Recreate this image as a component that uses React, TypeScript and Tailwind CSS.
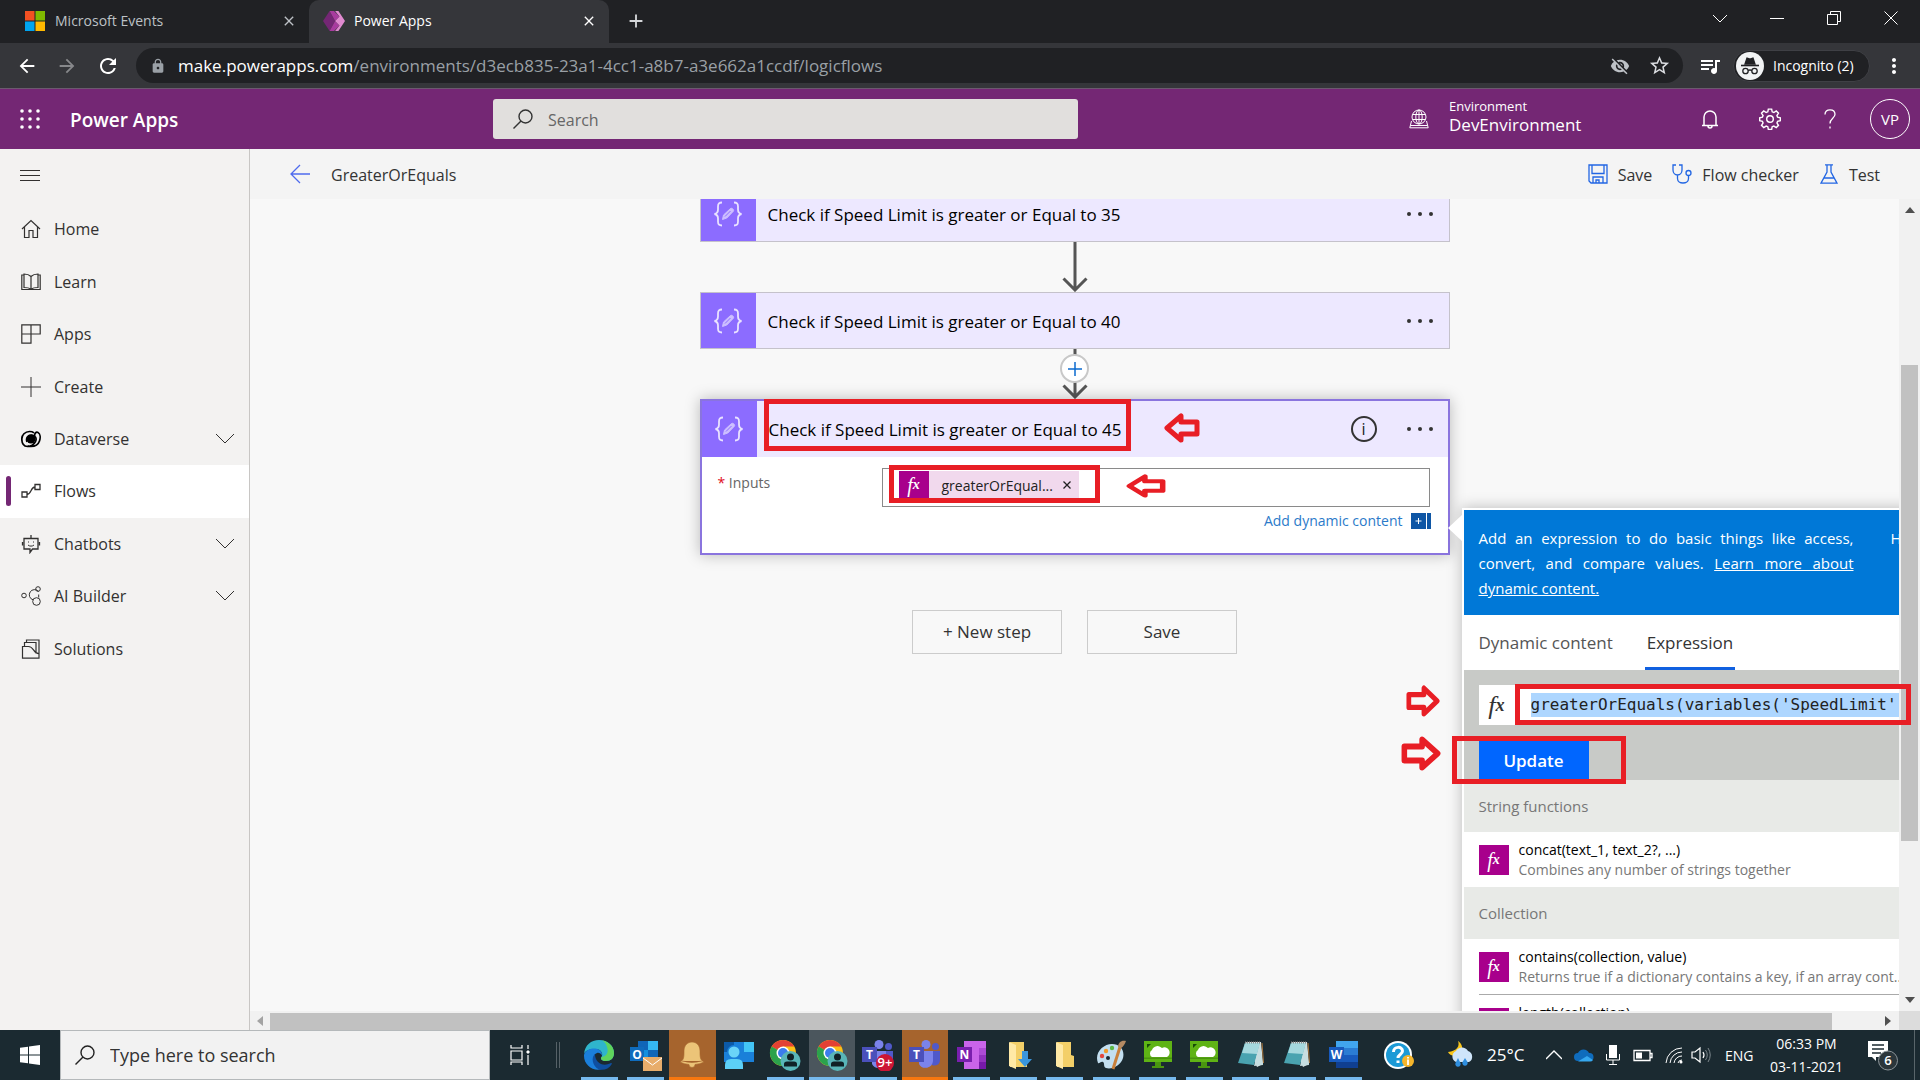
import { ReactNode } from "react";
import {
  MdAdd,
  MdArrowBack,
  MdArrowForward,
  MdClose,
  MdLock,
  MdMoreVert,
  MdQueueMusic,
  MdRefresh,
  MdStarBorder,
  MdVisibilityOff,
} from "react-icons/md";

const Svg = ({ box = 20, className = "w-5 h-5", children }: any) => (
  <svg
    viewBox={`0 0 ${box} ${box}`}
    className={`${className} shrink-0`}
    fill="none"
    stroke="currentColor"
  >
    {children}
  </svg>
);

const Chevron = () => (
  <Svg className="w-5 h-5">
    <path d="M1 5l9 9 9-9" />
  </Svg>
);

const Magnifier = ({ className }: { className: string }) => (
  <Svg className={className}>
    <circle cx="12.5" cy="7.5" r="6.5" strokeWidth="1.4" />
    <path d="M8 12l-7.500 7.500" strokeWidth="1.4" />
  </Svg>
);

const navItems: { label: string; icon: ReactNode; more?: boolean; active?: boolean }[] = [
  {
    label: "Home",
    icon: <path d="M1 10l9-8.500 9 8.500M3.500 8v10.500h4.500v-7h4v7h4.500V8" strokeWidth="1.200" />,
  },
  {
    label: "Learn",
    icon: (
      <path d="M3 3H.8v14.500h18.400V3H17M10 4.500C8 2.500 6 2 3 2v13.500c3 0 5 .3 7 1.500 2-1.200 4-1.500 7-1.500V2c-3 0-5 .5-7 2.500zV17" strokeWidth="1.200" />
    ),
  },
  {
    label: "Apps",
    icon: <path d="M.8.8h18.400v9.200H.8zM.8 10v9.200H10V.8" strokeWidth="1.200" />,
  },
  { label: "Create", icon: <path d="M10 0v20M0 10h20" /> },
  {
    label: "Dataverse",
    more: true,
    icon: (
      <>
        <circle cx="10" cy="10" r="4.500" fill="#000" stroke="none" />
        <path
          d="M6 13c-1.500-4 1-7 4.500-7 4 0 5.500 3.500 4 6.500-1.500 2.800-5 5-8 5C2.500 17.500.8 14 .8 10 .8 6 4 2.500 8.500 2.500c2 0 3.500.5 4.500 1.300M14 7c-1-2 1-4.500 3-3.500 2.500 1.300 2.500 5.500 1.500 8.500-1.200 3.500-4.500 5.500-8.500 5.500-1.500 0-2.500-.3-3.500-.8"
          stroke="#000"
          strokeWidth="1.700"
        />
      </>
    ),
  },
  {
    label: "Flows",
    active: true,
    icon: <path d="M1 11h5v5H1zM14 3.500h5v5h-5zM6 13.500c4.500 0 3.500-7.500 8-7.500" strokeWidth="1.300" />,
  },
  {
    label: "Chatbots",
    more: true,
    icon: (
      <>
        <path d="M3 4.500h14v10.500h-5.500L9 18.500V15H3zM10 4.500V1M1.500 8v3.500M18.500 8v3.500" strokeWidth="1.300" />
        <path d="M7 11c1.500 1.500 4.500 1.500 6 0M7 8h1M12 8h1" />
      </>
    ),
  },
  {
    label: "AI Builder",
    more: true,
    icon: (
      <>
        <circle cx="3" cy="9.500" r="2.300" />
        <circle cx="17" cy="3" r="2.300" />
        <circle cx="15.500" cy="15.500" r="3.800" />
        <path d="M12 13.800A5.200 5.200 0 1 1 17.500 5.500M17.700 8.500v3" />
      </>
    ),
  },
  {
    label: "Solutions",
    icon: (
      <path d="M1.500 7.500v11.700h16.500v-4.500c-5.500.5-5-7.200-10.500-7.200zM3.500 7V3.500h11.500v11M5.500 3.500V1H18v14" strokeWidth="1.200" />
    ),
  },
];

const Fx = ({ className }: { className: string }) => (
  <span
    className={`flex shrink-0 items-center justify-center font-['Liberation_Serif',serif] italic ${className}`}
  >
    f<sub className="bottom-0 text-[70%] font-bold">x</sub>
  </span>
);

const ComposeIcon = () => (
  <span className="flex w-[55px] shrink-0 items-center justify-center bg-[#8c6cff] text-[#e9e2ff]">
    <svg viewBox="0 0 30 26" className="h-[26px] w-[30px]" fill="none" stroke="currentColor">
      <path
        d="M9 1.500C5.500 1.500 5 3 5 5.500v3c0 2.500-1 4-3.500 4.500C4 13.500 5 15 5 17.500v3c0 2.500.5 4 4 4M21 1.500c3.500 0 4 1.500 4 4v3c0 2.500 1 4 3.500 4.500-2.500.5-3.500 2-3.500 4.500v3c0 2.500-.5 4-4 4"
        strokeWidth="1.800"
      />
      <path
        d="M9.500 18.500l1-4.500 7-6.500c1.500-1 4 1.500 2.800 2.800L13.800 17z"
        fill="#cdbfff"
        stroke="#cdbfff"
      />
      <path d="M12 15.500l5.500-5.500" stroke="#8c6cff" />
    </svg>
  </span>
);

const Dots = () => (
  <button aria-label="More" className="flex gap-[7px] self-center">
    <span className="h-1 w-1 rounded-full bg-[#333]" />
    <span className="h-1 w-1 rounded-full bg-[#333]" />
    <span className="h-1 w-1 rounded-full bg-[#333]" />
  </button>
);

const Connector = ({ add }: { add?: boolean }) => (
  <div className="relative flex h-[50px] justify-center">
    <svg viewBox="0 0 26 50" className="h-[50px] w-[26px]" fill="none" stroke="#555" strokeWidth="3">
      <path d="M13 0v48M1.500 36.500L13 48l11.500-11.500" />
    </svg>
    {add && (
      <button
        aria-label="Insert step"
        className="absolute top-[5px] flex h-[29px] w-[29px] items-center justify-center rounded-full border-2 border-[#c8c8c8] bg-white text-[#0b6bd0]"
      >
        <Svg box={14} className="w-[14px] h-[14px]">
          <path d="M7 0v14M0 7h14" strokeWidth="1.500" />
        </Svg>
      </button>
    )}
  </div>
);

const StepCard = ({ title }: { title: string }) => (
  <div className="flex h-[57px] border border-[#c5c2cb] bg-[#ede8ff] pr-4">
    <ComposeIcon />
    <span className="flex-1 self-center pl-3 pt-[2px] text-[17px] text-black">{title}</span>
    <Dots />
  </div>
);

const Arrow = ({ right, className }: { right?: boolean; className: string }) => (
  <svg
    viewBox="0 0 36 30"
    preserveAspectRatio="none"
    className={`absolute ${className}`}
    fill="none"
    stroke="#e81e25"
    strokeWidth="5"
    strokeLinejoin="round"
  >
    {right ? (
      <path d="M33 15L19 3v6H3v12h16v6z" />
    ) : (
      <path d="M3 15L17 3v6h16v12H17v6z" />
    )}
  </svg>
);

const FnHeader = ({ label }: { label: string }) => (
  <div className="flex h-[52px] items-center justify-between bg-[#e8eae7] pl-[15px] text-[15px] text-[#777]">
    <span>{label}</span>
    <a href="#more" className="w-[93px]">
      See more
    </a>
  </div>
);

const FnItem = ({ name, text }: { name: string; text: string }) => (
  <div className="ml-[15px] flex h-[55px] items-center gap-[10px]">
    <Fx className="h-[30px] w-[30px] bg-[#a8008c] text-[20px] text-white" />
    <div className="whitespace-nowrap text-[14px] leading-5">
      <p className="font-medium text-black">{name}</p>
      <p className="text-[#777]">{text}</p>
    </div>
  </div>
);

const ExpressionPanel = () => (
  <div className="absolute left-[760px] top-[107px] w-[600px] border-2 border-white bg-white shadow-[0_0_14px_rgba(0,0,0,0.250)]">
    <svg viewBox="0 0 15 28" className="absolute -left-4 top-1 h-7 w-[15px]">
      <path d="M15 0v28L0 14z" fill="#fff" />
    </svg>
    <div className="flex h-[105px] bg-[#0078d7] pt-4 pl-[15px] text-[15px] leading-[25px] text-white">
      <p className="w-[375px] text-justify">
        Add an expression to do basic things like access, convert, and compare values.{" "}
        <a href="#learn" className="underline">
          Learn more about dynamic content.
        </a>
      </p>
      <button className="ml-[37px] self-start">Hide</button>
    </div>
    <div className="flex h-[55px] gap-8 pl-[15px] text-[17px] text-[#333]">
      <button className="text-[#555]">Dynamic content</button>
      <button className="border-b-[3px] border-[#1060e0] px-[2px] pt-1 font-medium">
        Expression
      </button>
    </div>
    <div className="h-[110px] bg-[#c8cac7] pt-[15px] pl-[15px]">
      <div className="flex h-10 items-center bg-white">
        <Fx className="w-9 text-[26px] text-[#333]" />
        <input
          aria-label="Expression"
          className="ml-4 h-6 flex-1 bg-[#add6ff] font-['DejaVu_Sans_Mono',monospace] text-[16px] text-[#222]"
          defaultValue="greaterOrEquals(variables('SpeedLimit'"
        />
      </div>
      <button className="mt-4 h-[38px] w-[110px] bg-[#0066ff] pt-[2px] text-[17px] font-semibold text-white">
        Update
      </button>
    </div>
    <FnHeader label="String functions" />
    <FnItem name="concat(text_1, text_2?, ...)" text="Combines any number of strings together" />
    <FnHeader label="Collection" />
    <FnItem
      name="contains(collection, value)"
      text="Returns true if a dictionary contains a key, if an array cont..."
    />
    <hr className="ml-[15px] border-[#aaa]" />
    <FnItem name="length(collection)" text="Returns the number of elements in an array or string" />
  </div>
);

const Cloud = () => (
  <>
    <path d="M2 2h28v21H2z" fill="#5fb315" />
    <path d="M2 18.500h28V20H2zM13 23h6v4h-6zM10 27h12v2H10z" fill="#4a9410" />
    <path d="M5 5h4L5 9z" fill="#174a08" />
    <path d="M10 18a4 4 0 0 1 0-7 6 6 0 0 1 10-2 5 5 0 0 1 5 9z" fill="#fff" />
  </>
);

const Notepad = () => (
  <>
    <path d="M11 3h15l2 22-6 3z" fill="#d9e2e2" />
    <path d="M10 4h15l-6 22-16-2z" fill="#4aa3b0" />
    <path d="M10 4h15l-3 11-15-1z" fill="#a5d8de" />
    <path d="M25 4l3 22-9 1z" fill="#c6dde0" />
    <path d="M27 4l1.500 20" stroke="#a8763c" />
    <path d="M10 3.500h16" stroke="#888" strokeWidth="2" strokeDasharray="1 1" />
  </>
);

const Chrome = () => (
  <>
    <circle cx="14" cy="14" r="13" fill="#fbc116" />
    <path d="M14 14L2.700 7.500A13 13 0 0 1 25.300 7.500L14 7.500z" fill="#e34133" />
    <path d="M14 14L2.700 7.500A13 13 0 0 0 14 27l5.500-9z" fill="#2ba24c" />
    <circle cx="14" cy="14" r="6.500" fill="#fff" />
    <circle cx="14" cy="14" r="5" fill="#3c7ded" />
    <circle cx="21.500" cy="22" r="10" fill="#58b5b8" />
    <circle cx="21.500" cy="18" r="3.500" fill="#102126" />
    <path d="M15 27.500v-2.500q0-2.500 3-2.500h7q3 0 3 2.500v2.500z" fill="#102126" />
  </>
);

const Letter = ({ x = 7.5, children }: any) => (
  <text
    x={x}
    y="20"
    fontSize="12"
    fontWeight="700"
    fontFamily="Open Sans, sans-serif"
    textAnchor="middle"
    fill="#fff"
  >
    {children}
  </text>
);

const Teams = ({ badge }: { badge?: boolean }) => (
  <>
    <circle cx="17" cy="5.500" r="4.500" fill="#7b83eb" />
    <circle cx="26.500" cy="7.500" r="3.500" fill="#5059c9" />
    <path d="M21 12h10v9a5.500 5.500 0 0 1-8 5z" fill="#5059c9" />
    <path d="M10 12h14v10a7.500 7.500 0 0 1-14 3z" fill="#7b83eb" />
    <path d="M0 8h15v15H0z" fill="#4a50bb" />
    <Letter>T</Letter>
    {badge && (
      <>
        <circle cx="23" cy="24" r="9" fill="#cc1635" />
        <text x="23" y="28" fontSize="13" fontWeight="600" fontFamily="Open Sans, sans-serif" textAnchor="middle" fill="#fff">
          9+
        </text>
      </>
    )}
  </>
);

const Folder = ({ download }: { download?: boolean }) => (
  <>
    <path d="M8 3h14v13l3 1v11H8z" fill="#f3cf68" />
    <path d="M7 3l7 3v24l-7-3z" fill="#ffe9a6" />
    {download && <path d="M20 12h6v8h4l-7 8-7-8h4z" fill="#3a96dd" />}
  </>
);

const taskbarApps: { name: string; icon: ReactNode; tone?: string; bar?: string }[] = [
  {
    name: "Edge",
    icon: (
      <>
        <path
          d="M1 15C2 6 8 1 16 1c9 0 15 6 15 13 0 5-3 8-8 8-4 0-6-2-4.500-4 2-3 0-8-6.500-8C6 10 2 12 1 15z"
          fill="#2fb5cc"
        />
        <path d="M19 1.300c7 1.500 12 6.500 12 12.700 0 5-3 8-8 8-4 0-6-2-4.500-4 4 0 7-4 6-8-.6-4-2.500-7-5.500-8.700z" fill="#5fd45c" />
        <path d="M1 16c1-4 5-6.500 10-6.500 5 0 8.500 3 8 7-1-2-3-3-5-2.500-5 1-5 12 4 16.300C10 32.500.5 26 1 16z" fill="#1b7fdb" />
        <path d="M12 15c-4 3-3 12 4 15.500 5 1.300 10-1 12.500-5 .8-1.200 0-1.700-1-1.200C20 28 12 24 12 15z" fill="#0f4fa0" />
      </>
    ),
    bar: "bg-[#76b9ed]",
  },
  {
    name: "Outlook",
    icon: (
      <>
        <path d="M8 2h20v18H8z" fill="#1066b8" />
        <path d="M18 2h10v9H18z" fill="#35b8f1" />
        <path d="M8 11h10v9H8z" fill="#1490df" />
        <path d="M0 8h14v14H0z" fill="#0f6cbd" />
        <Letter x={7}>O</Letter>
        <path d="M13 18h19v14H13z" fill="#e8ad6b" />
        <path d="M13 19l9.500 7 9.500-7" stroke="#fff" />
      </>
    ),
    bar: "bg-[#76b9ed]",
  },
  {
    name: "Alerts",
    icon: (
      <path
        d="M4 23c4-2 4-5 4-11 0-6 4-9 8-9s8 3 8 9c0 6 0 9 4 11q-4 2-9 2.500a3 3 0 0 1-6 0Q8 25 4 23zM6 22q10 3 20 0"
        fill="#ecc478"
        stroke="#a6642d"
        strokeWidth=".6"
      />
    ),
    tone: "bg-[#a6642d]",
    bar: "bg-[#f7770f]",
  },
  {
    name: "People",
    icon: (
      <>
        <path d="M1 3h30v20H1z" fill="#1a80d9" />
        <path d="M21 3h10v10H21z" fill="#43c5f5" />
        <path d="M1 3h10v10H1z" fill="#0c5aa8" />
        <circle cx="11" cy="13" r="7" fill="#1a80d9" />
        <circle cx="11" cy="13" r="5.500" fill="#6ad4f8" />
        <path d="M2 30v-4q0-6 6-6h6q6 0 6 6v4z" fill="#5cd0f7" />
      </>
    ),
  },
  { name: "Chrome", icon: <Chrome />, bar: "bg-[#76b9ed]" },
  { name: "Chrome window", icon: <Chrome />, tone: "bg-[#4b565d]", bar: "bg-[#76b9ed]" },
  { name: "Teams", icon: <Teams badge />, bar: "bg-[#76b9ed]" },
  { name: "Teams call", icon: <Teams />, tone: "bg-[#a6642d]", bar: "bg-[#f7770f]" },
  {
    name: "OneNote",
    icon: (
      <>
        <path d="M8 2h22v28H8z" fill="#ca64ea" />
        <path d="M23 9h7v7h-7z" fill="#ae4bd5" />
        <path d="M23 16h7v7h-7z" fill="#9332bf" />
        <path d="M23 23h7v7h-7z" fill="#7719aa" />
        <path d="M1 8h15v15H1z" fill="#7a1fae" />
        <Letter x={8.5}>N</Letter>
      </>
    ),
    bar: "bg-[#76b9ed]",
  },
  { name: "Downloads", icon: <Folder download />, bar: "bg-[#76b9ed]" },
  { name: "Explorer", icon: <Folder />, bar: "bg-[#76b9ed]" },
  {
    name: "Paint",
    icon: (
      <>
        <path d="M3 24C-1 14 8 5 17 5c8 0 13 6 11 14-2 7-11 12-17 10-3-1-1-5-3-6-2-1-4 2-5 1z" fill="#c3dff0" />
        <circle cx="7" cy="17" r="2.200" fill="#e2483d" />
        <circle cx="11" cy="12" r="2.200" fill="#f19c2b" />
        <circle cx="17" cy="9" r="2.200" fill="#5db845" />
        <circle cx="13" cy="19" r="2" fill="#1b2a31" />
        <path d="M18 30l7-22" stroke="#c9803b" strokeWidth="3" />
        <path d="M23 8c0-4 3-7 8-6-1 3-3 6-5 7z" fill="#b58a63" />
      </>
    ),
    bar: "bg-[#76b9ed]",
  },
  { name: "Cloud PC", icon: <Cloud />, bar: "bg-[#76b9ed]" },
  { name: "Cloud PC 2", icon: <Cloud />, bar: "bg-[#76b9ed]" },
  { name: "Notepad", icon: <Notepad />, bar: "bg-[#76b9ed]" },
  { name: "Notepad 2", icon: <Notepad />, bar: "bg-[#76b9ed]" },
  {
    name: "Word",
    icon: (
      <>
        <path d="M8 2h22v7H8z" fill="#41a5ee" />
        <path d="M8 9h22v7H8z" fill="#2b7cd3" />
        <path d="M8 16h22v7H8z" fill="#185abd" />
        <path d="M8 23h22v6H8z" fill="#103f91" />
        <path d="M1 8h15v15H1z" fill="#185abd" />
        <Letter x={8.5}>W</Letter>
      </>
    ),
    bar: "bg-[#76b9ed]",
  },
];

const BrowserChrome = () => (
  <div className="shrink-0 bg-[#202124] text-[15px] text-white">
    <div className="flex h-[43px]">
      <div className="flex w-[309px] items-center pr-3 pb-[2px] pl-[25px] text-[#bdc1c6]">
        <svg viewBox="0 0 20 20" className="h-5 w-5">
          <path d="M0 0h9.500v9.500H0z" fill="#f25022" />
          <path d="M10.500 0H20v9.500h-9.500z" fill="#7fba00" />
          <path d="M0 10.500h9.500V20H0z" fill="#00a4ef" />
          <path d="M10.500 10.500H20V20h-9.500z" fill="#ffb900" />
        </svg>
        <span className="ml-[10px] flex-1 text-[14px]">Microsoft Events</span>
        <MdClose className="h-4 w-4" />
      </div>
      <div className="flex w-[300px] items-center rounded-t-[10px] bg-[#35363a] pr-3 pb-[2px] pl-[14px]">
        <svg viewBox="0 0 20 20" className="h-[22px] w-[22px]">
          <path d="M6 1l5 9-5 9-6-9z" fill="#742774" />
          <path d="M6 1h4l5 5-4 4 4 4-5 5H6l5-9z" fill="#a83b9e" />
          <path d="M11 1l4 5-4 4 4 4-4 5h3l6-9-6-9z" fill="#e08ad0" />
        </svg>
        <span className="ml-[9px] flex-1 text-[14px]">Power Apps</span>
        <MdClose className="h-4 w-4" />
      </div>
      <button aria-label="New tab" className="ml-4 pb-[2px] text-[#d5d7da]">
        <MdAdd className="h-[22px] w-[22px]" />
      </button>
      <div className="ml-auto flex h-9 items-center">
        <button aria-label="Search tabs" className="flex w-[57px] justify-center">
          <Svg box={14} className="w-[14px] h-[14px]">
            <path d="M0 4l7 7 7-7" />
          </Svg>
        </button>
        <button aria-label="Minimize" className="flex w-[57px] justify-center">
          <Svg box={14} className="w-[14px] h-[14px]">
            <path d="M0 7.500h14" />
          </Svg>
        </button>
        <button aria-label="Restore" className="flex w-[57px] justify-center">
          <Svg box={14} className="w-[14px] h-[14px]">
            <path d="M.5 3.500h10v10H.5zM3.500 3.500v-3h10v10h-3" />
          </Svg>
        </button>
        <button aria-label="Close" className="flex w-[58px] justify-center">
          <Svg box={14} className="w-[14px] h-[14px]">
            <path d="M.5.5l13 13M13.500.5l-13 13" />
          </Svg>
        </button>
      </div>
    </div>
    <div className="flex h-[46px] items-center border-b border-[#6b5a6e] bg-[#35363a] pr-[14px] pl-4">
      <MdArrowBack className="h-[22px] w-[22px]" />
      <MdArrowForward className="ml-[18px] h-[22px] w-[22px] text-[#87888b]" />
      <MdRefresh className="ml-[18px] h-6 w-6" />
      <div className="ml-4 flex h-[35px] flex-1 items-center rounded-full bg-[#202124] pr-3 pl-[14px] text-[#9aa0a6]">
        <MdLock className="h-4 w-4" />
        <p className="ml-3 flex-1 text-[17px]">
          <span className="text-white">make.powerapps.com</span>
          /environments/d3ecb835-23a1-4cc1-a8b7-a3e662a1ccdf/logicflows
        </p>
        <MdVisibilityOff className="h-5 w-5 text-[#bdc1c6]" />
        <MdStarBorder className="ml-[18px] h-[23px] w-[23px] text-[#dadce0]" />
      </div>
      <MdQueueMusic className="ml-[15px] h-6 w-6" />
      <div className="ml-[11px] flex h-8 w-[137px] items-center rounded-full border border-[#3f4045] bg-[#202124] pl-[2px] text-[14px]">
        <svg viewBox="0 0 28 28" className="h-7 w-7" fill="none" stroke="#202124" strokeWidth="1.300">
          <circle cx="14" cy="14" r="14" fill="#f1f3f4" stroke="none" />
          <path d="M9 12l2-6 3 1 3-1 2 6z" fill="#202124" />
          <path d="M5 13.500h18" strokeWidth="1.600" />
          <circle cx="9.500" cy="19" r="2.700" />
          <circle cx="18.500" cy="19" r="2.700" />
          <path d="M12 18.500q2-1 4 0" />
        </svg>
        <span className="ml-[9px]">Incognito (2)</span>
      </div>
      <MdMoreVert className="ml-3 h-6 w-6" />
    </div>
  </div>
);

const AppHeader = () => (
  <header className="flex h-[60px] shrink-0 items-center bg-[#742774] text-white">
    <div className="flex w-[493px] items-center pl-5">
      <svg viewBox="0 0 20 20" className="h-5 w-5" fill="#fff">
        {[2, 10, 18].map((y) => [2, 10, 18].map((x) => <circle key={x + "-" + y} cx={x} cy={y} r="1.800" />))}
      </svg>
      <h1 className="ml-[30px] pt-[2px] text-[19px] font-semibold">Power Apps</h1>
    </div>
    <div className="flex h-10 w-[585px] items-center rounded-[3px] bg-[#e1dfdd] pl-5 text-[#333]">
      <Magnifier className="h-5 w-5" />
      <input
        aria-label="Search"
        placeholder="Search"
        className="ml-[15px] flex-1 pt-[2px] text-[16px] outline-none placeholder:text-[#666]"
      />
    </div>
    <div className="ml-auto flex w-[271px] items-center">
      <Svg className="w-5 h-5">
        <circle cx="10" cy="8" r="7" />
        <ellipse cx="10" cy="8" rx="3.200" ry="7" />
        <path d="M3.500 5.500h13M3.500 10.500h13M10 1v14M2.500 12L.8 18.800h18.400L17.500 12M1.500 16.500h17" />
      </Svg>
      <div className="ml-5 pb-[6px]">
        <p className="text-[13px] leading-[18px]">Environment</p>
        <p className="text-[17px] leading-5">DevEnvironment</p>
      </div>
    </div>
    <button aria-label="Notifications" className="flex w-[60px] justify-center">
      <Svg className="w-5 h-5">
        <path d="M2 16.500h16M4 16.500V8a6 6 0 0 1 12 0v8.500M8 17a2 2 0 0 0 4 0" strokeWidth="1.500" />
      </Svg>
    </button>
    <button aria-label="Settings" className="flex w-[60px] justify-center">
      <Svg className="w-[22px] h-[22px]">
        <circle cx="10" cy="10" r="3" strokeWidth="1.300" />
        <path
          d="M8.500 1h3l.5 2.500 1.500.6L15.700 2.700l2 2-1.400 2.200.6 1.500 2.500.5v2.700l-2.500.5-.6 1.500 1.400 2.200-2 2-2.200-1.400-1.500.6-.5 2.500h-3L8 17l-1.500-.6-2.200 1.400-2-2 1.400-2.200-.6-1.500-2.500-.5V8.900l2.500-.5.6-1.500L2.300 4.700l2-2 2.200 1.400L8 3.500z"
          strokeWidth="1.300"
        />
      </Svg>
    </button>
    <button aria-label="Help" className="flex w-[60px] justify-center">
      <Svg className="w-5 h-5">
        <path d="M5 5.500C5 2.500 7 .8 10 .8s5 1.700 5 4.500c0 4-5 4-5 9.200M10 17.500v2" strokeWidth="1.300" />
      </Svg>
    </button>
    <div className="flex w-[60px] justify-center">
      <button className="h-10 w-10 rounded-full border border-white text-[15px]">VP</button>
    </div>
  </header>
);

const Sidebar = () => (
  <nav className="w-[250px] shrink-0 border-r border-[#c8c6c4] bg-[#f3f2f1] text-[#323130]">
    <button aria-label="Collapse menu" className="flex h-[54px] items-center pl-5">
      <Svg className="w-5 h-5">
        <path d="M0 4.500h20M0 9.500h20M0 14.500h20" />
      </Svg>
    </button>
    <ul className="flex h-[472px] flex-col">
      {navItems.map((item) => (
        <li key={item.label} className={`flex flex-1 ${item.active ? "bg-white font-medium" : ""}`}>
          <a href={"#" + item.label} className="flex flex-1 items-center pr-[14px]">
            <span className={`ml-[6px] h-[30px] w-[5px] rounded-sm ${item.active ? "bg-[#742774]" : ""}`} />
            <span className="mr-[13px] ml-[10px]">
              <Svg className="w-5 h-5">{item.icon}</Svg>
            </span>
            <span className="flex-1">{item.label}</span>
            {item.more && <Chevron />}
          </a>
        </li>
      ))}
    </ul>
  </nav>
);

const CommandBar = () => (
  <div className="flex h-[50px] shrink-0 items-center bg-[#f4f4f4] pr-10 pl-10 text-[#333]">
    <button aria-label="Back" className="text-[#4f6bed]">
      <Svg className="w-5 h-5">
        <path d="M20 10H1M10 1l-9 9 9 9" strokeWidth="1.300" />
      </Svg>
    </button>
    <h2 className="ml-[21px] flex-1 pt-[2px]">GreaterOrEquals</h2>
    <button className="flex items-center gap-[10px]">
      <Svg className="w-5 h-5 text-[#2266e3]">
        <path d="M1 1h18v18H3l-2-2zM4 1v8.500h12V1M5 19v-6h10v6M8 19v-3h3v3" strokeWidth="1.300" />
      </Svg>
      <span className="pt-[2px]">Save</span>
    </button>
    <button className="ml-5 flex items-center gap-[10px]">
      <Svg className="w-5 h-5 text-[#2266e3]">
        <path d="M4 1H1v5c0 3 2 5 4.500 5S10 9 10 6V1H7M5.500 11v3.500c0 6 11 6 11 0V12" strokeWidth="1.300" />
        <circle cx="16.500" cy="9" r="2.500" strokeWidth="1.300" />
      </Svg>
      <span className="pt-[2px]">Flow checker</span>
    </button>
    <button className="ml-5 flex items-center gap-[10px]">
      <Svg className="w-5 h-5 text-[#2266e3]">
        <path d="M6 .8h8M8 1v7L2 19.200h16L12 8V1M5 14h10" strokeWidth="1.300" />
      </Svg>
      <span className="pt-[2px]">Test</span>
    </button>
  </div>
);

const Canvas = () => (
  <div className="flex min-w-0 flex-1 justify-center overflow-hidden bg-[#f8f8f8]">
    <div className="-mt-[14px] w-[750px] shrink-0">
      <StepCard title="Check if Speed Limit is greater or Equal to 35" />
      <Connector />
      <StepCard title="Check if Speed Limit is greater or Equal to 40" />
      <Connector add />
      <div className="relative h-[156px] border-2 border-[#8a74de] bg-white shadow-[0_0_14px_rgba(0,0,0,0.250)]">
        <div className="flex h-14 items-center bg-[#ede8ff] pr-[15px]">
          <span className="flex self-stretch">
            <ComposeIcon />
          </span>
          <span className="flex-1 pl-3 pt-[2px] text-[17px] text-black">
            Check if Speed Limit is greater or Equal to 45
          </span>
          <button
            aria-label="Info"
            className="mr-[30px] h-[26px] w-[26px] rounded-full border-2 border-[#333] text-[16px] leading-[20px] text-[#222]"
          >
            i
          </button>
          <Dots />
        </div>
        <div className="flex pt-[11px] pr-[18px] pl-4">
          <label htmlFor="inputs" className="w-[164px] pt-1 text-[14px] text-[#666]">
            <span className="text-[#e00b1c]">*</span> Inputs
          </label>
          <div className="flex h-[39px] flex-1 items-start border border-[#8a8a8a] pt-[2px] pl-4">
            <span className="flex h-7 w-[180px] items-center bg-[#f1d9ed] text-[14px] text-[#222]">
              <Fx className="h-7 w-[30px] bg-[#a8008c] text-[20px] text-white" />
              <span className="ml-[13px] flex-1">greaterOrEqual...</span>
              <button aria-label="Remove" className="mr-2">
                <Svg box={8} className="w-2 h-2">
                  <path d="M.5.5l7 7M7.500.5l-7 7" strokeWidth="1.300" />
                </Svg>
              </button>
            </span>
            <input id="inputs" className="min-w-0 flex-1 outline-none" />
          </div>
        </div>
        <button className="ml-auto mr-[17px] mt-[3px] flex items-center gap-2 text-[14px] text-[#2b7ac9]">
          Add dynamic content
          <svg viewBox="0 0 20 16" className="h-4 w-5">
            <path d="M0 0h15v16H0zM16 0h4v16h-4z" fill="#0f56a5" />
            <path d="M7.500 5v6M4.500 8h6" stroke="#fff" />
          </svg>
        </button>
        {/* reviewer marks on the step */}
        <div className="absolute -top-[2px] left-[62px] h-[52px] w-[367px] border-[5px] border-[#e81e25]" />
        <Arrow className="left-[462px] top-3 h-[30px] w-9" />
        <div className="absolute top-16 left-[187px] h-[38px] w-[211px] border-[5px] border-[#e81e25]" />
        <Arrow className="left-[424px] top-[73px] h-6 w-10" />
        <ExpressionPanel />
      </div>
      <div className="mt-[55px] flex justify-center gap-[25px] text-[17px] text-[#333]">
        <button className="h-11 w-[150px] border border-[#ccc]">+ New step</button>
        <button className="h-11 w-[150px] border border-[#ccc]">Save</button>
      </div>
    </div>
  </div>
);

const Taskbar = () => (
  <footer className="flex h-[50px] shrink-0 items-center bg-[#1b2a31] text-[15px] text-white">
    <button aria-label="Start" className="flex w-[60px] justify-center">
      <svg viewBox="0 0 20 20" className="h-5 w-5" fill="#fff">
        <path d="M0 2.800l8-1.100v7.800H0zM9 1.500L20 0v9.500H9zM0 10.500h8v7.800l-8-1.100zM9 10.500h11V20L9 18.500z" />
      </svg>
    </button>
    <div className="flex h-[50px] w-[430px] items-center border border-[#b5b9bb] bg-[#f2f2f2] pl-[14px] text-[#222]">
      <Magnifier className="h-5 w-5" />
      <input
        aria-label="Type here to search"
        placeholder="Type here to search"
        className="ml-[15px] flex-1 text-[18px] outline-none placeholder:text-[#333]"
      />
    </div>
    <Svg className="ml-5 w-5 h-5">
      <path d="M1 0v3h11V0M1 6h11v9H1zM1 20v-3h11v3M18 0v4M18 10v10" strokeWidth="1.200" />
      <path d="M17 6h2v2h-2z" fill="#fff" />
    </Svg>
    <span className="ml-[26px] h-[26px] w-1 border-x border-[#566167]" />
    <div className="ml-4 flex h-[50px] w-[791px]">
      {taskbarApps.map((app) => (
        <button
          key={app.name}
          aria-label={app.name}
          className={`flex flex-1 flex-col items-center pt-[9px] ${app.tone || ""}`}
        >
          <svg viewBox="0 0 32 32" className="h-8 w-8" fill="none">
            {app.icon}
          </svg>
          <span
            className={`mt-auto h-[3px] ${app.tone ? "w-full" : "w-[37px]"} ${app.bar || ""}`}
          />
        </button>
      ))}
    </div>
    <svg viewBox="0 0 32 32" className="ml-4 h-8 w-8">
      <circle cx="15" cy="16" r="14" fill="#fff" />
      <circle cx="15" cy="16" r="12" fill="#1c9ad6" />
      <path d="M10.500 13c0-6 9-6 9-1 0 3.500-4.500 3.500-4.500 7M15 21.500v2.500" fill="none" stroke="#fff" strokeWidth="3" />
      <circle cx="25" cy="22" r="6" fill="#f5b52b" />
      <path d="M25 18v1.500M25 20.500V26" stroke="#fff" strokeWidth="1.800" />
    </svg>
    <div className="ml-auto flex items-center">
      <svg viewBox="0 0 28 28" className="h-7 w-7">
        <path d="M11 0c2 5-1 10-10 11 2 5 11 5 14-1 1-5-1-8-4-10z" fill="#f8c51c" />
        <path d="M9 21a6 6 0 0 1 0-11 7 7 0 0 1 12 0 6 6 0 0 1 1 11z" fill="#cfe5fa" />
        <path d="M11 17l2.500 5a2.700 2.700 0 1 1-5 0zM18 17l2.500 4a2.700 2.700 0 1 1-5 0z" fill="#2f8fe0" />
      </svg>
      <span className="ml-3 w-[59px] text-[17px]">25°C</span>
      <Svg box={16} className="w-4 h-4">
        <path d="M0 12l8-8 8 8" strokeWidth="1.300" />
      </Svg>
      <svg viewBox="0 0 20 14" className="ml-3 h-[14px] w-5">
        <path d="M4 13a4 4 0 0 1 0-8 6 6 0 0 1 11 0 4 4 0 0 1 1 8z" fill="#0f6cbd" />
        <path d="M4 13.500L13 8l6 4q-1 1.500-3 1.500z" fill="#36a8f0" />
      </svg>
      <Svg box={20} className="ml-[9px] w-5 h-5">
        <path d="M6 0h8v13H6z" fill="#fff" stroke="none" />
        <path d="M3.500 9v6h13V9M10 15v4M6 19.500h8" />
      </Svg>
      <Svg box={20} className="ml-[10px] w-5 h-5">
        <path d="M1 5.500h16v10H1zM17 8.500h2v4h-2" strokeWidth="1.300" />
        <path d="M3 7.500h6v6H3z" fill="#fff" stroke="none" />
      </Svg>
      <Svg box={18} className="ml-3 w-[18px] h-[18px]">
        <path d="M1 17A16 16 0 0 1 17 2M5 17A12 12 0 0 1 17 6M9 17a8 8 0 0 1 8-7M13 17a4 4 0 0 1 4-3" />
        <circle cx="16" cy="16" r="1.500" fill="#fff" stroke="none" />
      </Svg>
      <Svg className="ml-2 w-5 h-5">
        <path d="M1 7h3l5-4v14l-5-4H1zM12 7q2 3 0 6" strokeWidth="1.200" />
        <path d="M14.500 5q3.500 5 0 10M17 3q4.500 7 0 14" stroke="#7d878c" />
      </Svg>
      <span className="ml-[14px] w-11 text-[14px]">ENG</span>
      <p className="w-[75px] text-center text-[14px] leading-[23px]">
        06:33 PM 03-11-2021
      </p>
      <svg viewBox="0 0 32 32" className="mr-[6px] ml-6 h-8 w-8">
        <path d="M0 2h20v16H8v4l-4-4H0z" fill="#fff" />
        <path d="M4 6h12M4 10h12M4 14h9" stroke="#1b2a31" strokeWidth="1.300" />
        <circle cx="20" cy="21.500" r="9.500" fill="#2b363b" stroke="#8b9499" />
        <text x="20" y="26" fontSize="13" fontWeight="600" fontFamily="Open Sans, sans-serif" textAnchor="middle" fill="#fff">
          6
        </text>
      </svg>
      <span className="ml-2 mr-[5px] h-[50px] w-px bg-[#59656a]" />
    </div>
  </footer>
);

export default function App() {
  return (
    <div className="flex h-screen flex-col overflow-hidden font-['Open_Sans','Noto_Sans',sans-serif] text-[16px]">
      <BrowserChrome />
      <AppHeader />
      <div className="flex min-h-0 flex-1">
        <Sidebar />
        <main className="flex min-w-0 flex-1 flex-col">
          <CommandBar />
          <div className="relative flex min-h-0 flex-1">
            <Canvas />
            <div className="flex w-[21px] flex-col items-center bg-[#f1f1f1] py-2">
              <svg viewBox="0 0 10 6" className="h-[6px] w-[10px]">
                <path d="M0 6h10L5 0z" fill="#505050" />
              </svg>
              <div className="mt-[152px] h-[476px] w-[17px] bg-[#c1c1c1]" />
              <svg viewBox="0 0 10 6" className="mt-auto h-[6px] w-[10px]">
                <path d="M0 0h10L5 6z" fill="#505050" />
              </svg>
            </div>
            {/* reviewer marks on the expression panel */}
            <Arrow right className="right-[480px] top-[486px] h-8 w-[34px]" />
            <Arrow right className="right-[479px] top-[537px] h-[35px] w-10" />
            <div className="absolute top-[485px] right-[9px] h-[41px] w-[396px] border-[5px] border-[#e81e25]" />
            <div className="absolute top-[537px] right-[294px] h-[48px] w-[174px] border-[5px] border-[#e81e25]" />
          </div>
          <div className="flex h-[19px] shrink-0 items-center bg-[#f1f1f1]">
            <svg viewBox="0 0 6 10" className="mx-[7px] h-[10px] w-[6px]">
              <path d="M6 0v10L0 5z" fill="#a3a3a3" />
            </svg>
            <div className="mt-[2px] h-[17px] flex-1 bg-[#c1c1c1]" />
            <svg viewBox="0 0 6 10" className="mr-2 ml-[53px] h-[10px] w-[6px]">
              <path d="M0 0v10l6-5z" fill="#505050" />
            </svg>
            <span className="h-full w-[21px] bg-[#dcdcdc]" />
          </div>
        </main>
      </div>
      <Taskbar />
    </div>
  );
}
